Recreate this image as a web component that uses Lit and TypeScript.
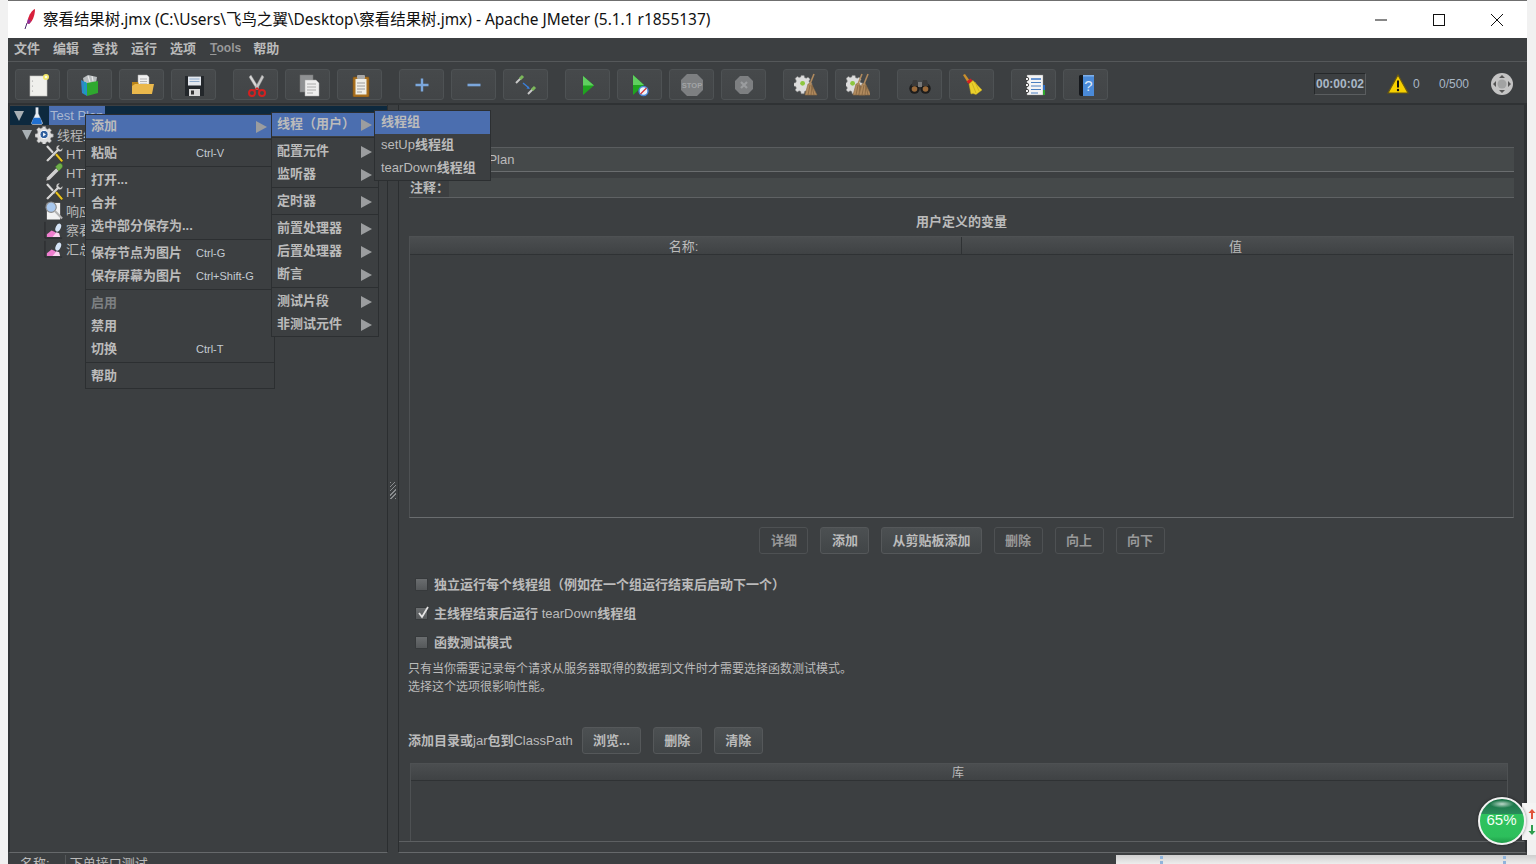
import { LitElement, html, css, svg } from "lit";
import { customElement } from "lit/decorators.js";

const GEAR = svg`<path d="M10 1h4l.6 3 2.3 1 2.6-1.6 2.8 2.8-1.6 2.6 1 2.3 3 .6v4l-3 .6-1 2.3 1.6 2.6-2.8 2.8-2.6-1.6-2.3 1-.6 3h-4l-.6-3-2.3-1-2.6 1.6-2.8-2.8 1.6-2.6-1-2.3-3-.6v-4l3-.6 1-2.3L1.700 5.200l2.800-2.800 2.600 1.600 2.300-1z" transform="scale(.72) translate(0 1)" fill="#dcdcdc" stroke="#8a8a8a" stroke-width=".8"/>`;
const BROOM = svg`<path d="M14 11l3-1 6 12H11z" fill="#b08a5e" stroke="#8a6a44" stroke-width=".6"/><path d="M14 22l2-10M17 22l1-10M20 22l-2-9" stroke="#7d5f3c" stroke-width=".7"/><path d="M16 11l4-10" stroke="#b08a5e" stroke-width="1.600"/>`;

const icons: Record<string, unknown> = {
  newFile: svg`<rect x="4" y="3" width="17" height="20" fill="#f0f0ec" stroke="#c4c4c0" stroke-width=".6"/><circle cx="6.500" cy="8" r=".6" fill="#999"/><circle cx="6.500" cy="13" r=".6" fill="#999"/><circle cx="6.500" cy="18" r=".6" fill="#999"/><circle cx="20" cy="4" r="3" fill="#f3e76a"/><circle cx="20" cy="4" r="1.300" fill="#fffde0"/>`,
  templates: svg`<path d="M5 5l5-3 9 2-1 6H6z" fill="#b9bdbf"/><path d="M3 7l6 3v13l-5-3z" fill="#2f86c9"/><path d="M9 10l11-2v12l-11 3z" fill="#2fa82f"/><path d="M7 9v12" stroke="#19a0b8" stroke-width="2"/><path d="M10 3l2 6M14 3l1 5" stroke="#e8e8e8" stroke-width="1.200"/>`,
  open: svg`<path d="M8 2h9l2 2v9H8z" fill="#f0f0f0" stroke="#aaa" stroke-width=".5"/><path d="M10 6h7M10 8.500h7M10 11h7" stroke="#999" stroke-width=".7"/><path d="M2 9h6l1 3h13v9H2z" fill="#b98419"/><path d="M2 13l3-2h19l-2 10H2z" fill="#eab84c"/>`,
  save: svg`<path d="M3 3h19v20H3z" fill="#23272b"/><rect x="6" y="3.500" width="13" height="9" fill="#e4e8ee"/><path d="M7.500 6h10M7.500 8.500h10" stroke="#8eaacb" stroke-width="1"/><rect x="7" y="16" width="11" height="7" fill="#d8d8d8"/><rect x="9" y="17.500" width="3" height="4" fill="#333"/>`,
  cut: svg`<path d="M7 2l8 13-2 2L5 4z" fill="#d8d8d8" stroke="#888" stroke-width=".4"/><path d="M18 2L11 15l2 2 7-13z" fill="#c8c8c8" stroke="#888" stroke-width=".4"/><circle cx="8" cy="20" r="3" fill="none" stroke="#d42020" stroke-width="2"/><circle cx="18" cy="20" r="3" fill="none" stroke="#d42020" stroke-width="2"/><path d="M10 18l3-3 3 3" stroke="#d42020" stroke-width="1.500" fill="none"/>`,
  copy: svg`<rect x="4" y="2" width="13" height="17" fill="#8f9193" stroke="#777" stroke-width=".5"/><path d="M9 7h11l3 3v13H9z" fill="#eeeeee" stroke="#aaa" stroke-width=".5"/><path d="M11 11h9M11 14h9M11 17h9M11 20h6" stroke="#999" stroke-width=".8"/>`,
  paste: svg`<rect x="5" y="4" width="16" height="20" rx="1" fill="#a9701f" stroke="#7d5214" stroke-width=".6"/><rect x="7.500" y="6" width="11" height="15.500" fill="#f0efe8"/><rect x="9" y="2" width="8" height="4" rx="1" fill="#a8a8a8"/><path d="M9 10h8M9 13h8M9 16h8M9 19h5" stroke="#888" stroke-width=".8"/>`,
  plus: svg`<path d="M12 5.500v13M5.500 12h13" stroke="#7ba7dc" stroke-width="2.400"/>`,
  minus: svg`<path d="M5.500 12h13" stroke="#7ba7dc" stroke-width="2.600"/>`,
  toggle: svg`<path d="M2 10l6-6" stroke="#c8c8c8" stroke-width="2"/><path d="M6 6l3-3" stroke="#7bb85a" stroke-width="3"/><path d="M14 21l6-6" stroke="#c8c8c8" stroke-width="2"/><path d="M18 17l3-3" stroke="#7bb85a" stroke-width="3"/><path d="M9 10l6 5" stroke="#3b7fd8" stroke-width="1.400"/><path d="M16 16l-3.500-.4 1.500-2.400z" fill="#3b7fd8"/>`,
  start: svg`<path d="M7 3l11 9.500L7 22z" fill="#1fa51f"/><path d="M7 3l11 9.500H7z" fill="#5fcf5f"/>`,
  startNoTimer: svg`<path d="M5 2l11 10L5 22z" fill="#1fa51f"/><path d="M5 2l11 10H5z" fill="#5fcf5f"/><circle cx="15.500" cy="18" r="4.500" fill="#eef3fb" stroke="#4a86d8" stroke-width="1.400"/><path d="M12.500 21l6-6" stroke="#d43030" stroke-width="1.300"/>`,
  stop: svg`<path d="M7 1h10l6 6v10l-6 6H7l-6-6V7z" fill="#7d7f81"/><text x="12" y="15" font-size="7.500" font-weight="700" text-anchor="middle" fill="#a2a4a6" font-family="Liberation Sans, sans-serif">STOP</text>`,
  shutdown: svg`<path d="M8 3h8l5 5v8l-5 5H8l-5-5V8z" fill="#7d7f81"/><path d="M9 9l6 6M15 9l-6 6" stroke="#9a9c9e" stroke-width="2.200"/>`,
  clear: svg`<g transform="translate(0 1)">${GEAR}<circle cx="8.600" cy="9.300" r="2.400" fill="#8cc63f"/></g>${BROOM}`,
  clearAll: svg`<g transform="translate(-1 1)">${GEAR}<circle cx="7.600" cy="9.300" r="2.400" fill="#8cc63f"/></g><g transform="translate(-4 0)">${BROOM}</g><g transform="translate(2 0)">${BROOM}</g>`,
  search: svg`<circle cx="6.500" cy="15.500" r="5.200" fill="#1c1c1c"/><circle cx="17.500" cy="15.500" r="5.200" fill="#1c1c1c"/><circle cx="6.500" cy="16" r="2.800" fill="#9a6a3a"/><circle cx="17.500" cy="16" r="2.800" fill="#9a6a3a"/><path d="M5 7h4l1.500 5h3L15 7h4l1.500 6h-17z" fill="#3a3a3a"/><rect x="10" y="9" width="4" height="5" fill="#777"/>`,
  reset: svg`<path d="M3 2l2-1 5 7-2 2z" fill="#c98f2c"/><path d="M6.500 8.500l4-3 2.500 2.500-4 3z" fill="#d42020"/><path d="M9 11l4-3.500 9 9.500-6 4.500-3-1-2 .5z" fill="#e9d02c" stroke="#c9a818" stroke-width=".5"/><path d="M12 10l4 10M15 9l4 9" stroke="#c9a818" stroke-width=".7"/>`,
  functions: svg`<rect x="5" y="2" width="16" height="20" fill="#f4f4f4" stroke="#888" stroke-width=".4"/><path d="M9 6h10" stroke="#2f6fc4" stroke-width="1.400"/><path d="M9 9.500h10M9 13h10M9 16.500h10M9 20h7" stroke="#4a7fc0" stroke-width="1"/><circle cx="5" cy="6" r="1.700" fill="#eee" stroke="#222" stroke-width=".8"/><circle cx="5" cy="12" r="1.700" fill="#eee" stroke="#222" stroke-width=".8"/><circle cx="5" cy="18" r="1.700" fill="#eee" stroke="#222" stroke-width=".8"/><rect x="21" y="12" width="2" height="5" fill="#2f6fc4"/><rect x="21" y="17" width="2" height="5" fill="#2fa82f"/>`,
  help: svg`<path d="M6 2h4v21H7c-1 0-2-1-2-2V3z" fill="#15181c"/><rect x="9" y="2" width="11" height="21" fill="#4a8ad8"/><path d="M9 2h11v1.500H9z" fill="#7fb0ea"/><text x="14.500" y="18" font-size="15" text-anchor="middle" fill="#dfeaf8" font-family="Liberation Sans, sans-serif">?</text>`,
};

const treeIcons: Record<string, unknown> = {
  flask: svg`<path d="M8 1h3v7l5 11c.3 1-.3 2-1.300 2H4.300C3.300 21 2.700 20 3 19L8 8z" fill="#e8eef4" stroke="#ccd" stroke-width=".4"/><path d="M5.500 13h8l2 6.500c0 .6-.4 1-1 1h-10.500c-.6 0-1-.4-1-1z" fill="#1f6fd0"/>`,
  gear: svg`<g transform="scale(1.050)">${GEAR}</g><circle cx="9" cy="10" r="4.300" fill="#2f5f9e" stroke="#fff" stroke-width="1"/><path d="M8 8l3 2-3 2z" fill="#fff"/>`,
  tool: svg`<path d="M2 3l2-2 9 10-2 2z" fill="#d8d8d8" stroke="#333" stroke-width=".5"/><path d="M11 11l2-2 7 8c.5 1-1 2.500-2 2z" fill="#e8c21c" stroke="#222" stroke-width=".6"/><path d="M17 1l-2 3 2 2 3-2c0 3-2 5-5 4L4 19l-2-2L13 6c-1-3 1-5 4-5z" fill="#d2d2d2" stroke="#333" stroke-width=".6"/>`,
  pipette: svg`<path d="M2 19l1-4L13 5l3 3L6 18z" fill="#d0d0d0" stroke="#333" stroke-width=".6"/><path d="M12 4l3-3c1-1 3-1 4 .5s.5 3-.5 4l-3 3z" fill="#6fb04a" stroke="#3d6d2a" stroke-width=".5"/>`,
  search: svg`<rect x="3" y="2" width="14" height="17.500" fill="#f2f2f2"/><circle cx="7.500" cy="6.500" r="5.400" fill="#a8c8ee" stroke="#8a8a8a" stroke-width="1.200"/><path d="M11.500 10.500l7.500 8" stroke="#b4b4b4" stroke-width="2.200"/>`,
  graph: svg`<path d="M1 2v17h18" stroke="#26282a" stroke-width="1" fill="none"/><path d="M3 18v-3l5-4 4 2 3 5z" fill="#f07fd0"/><path d="M9 18l4-5 3 1 1 4z" fill="#fbd4f0"/><ellipse cx="15" cy="8" rx="2.600" ry="4.500" transform="rotate(25 15 8)" fill="#d5e4f7"/>`,
  feather: svg`<path d="M14 0c-3 1-6 6-7 10l-1 4 2 1c3-2 6-8 6-15z" fill="#d8203a"/><path d="M7 10l-1 4 2 1 2-3z" fill="#8a2fa0"/><path d="M6 14l-2 6" stroke="#4a2a6a" stroke-width="1"/>`,
};

type MenuRow = { label: string; keys?: string; arrow?: boolean; active?: boolean; off?: boolean } | null;

const mainMenu: MenuRow[] = [
  { label: "添加", arrow: true, active: true },
  null,
  { label: "粘贴", keys: "Ctrl-V" },
  null,
  { label: "打开..." },
  { label: "合并" },
  { label: "选中部分保存为..." },
  null,
  { label: "保存节点为图片", keys: "Ctrl-G" },
  { label: "保存屏幕为图片", keys: "Ctrl+Shift-G" },
  null,
  { label: "启用", off: true },
  { label: "禁用" },
  { label: "切换", keys: "Ctrl-T" },
  null,
  { label: "帮助" },
];

const addMenu: MenuRow[] = [
  { label: "线程（用户）", arrow: true, active: true },
  null,
  { label: "配置元件", arrow: true },
  { label: "监听器", arrow: true },
  null,
  { label: "定时器", arrow: true },
  null,
  { label: "前置处理器", arrow: true },
  { label: "后置处理器", arrow: true },
  { label: "断言", arrow: true },
  null,
  { label: "测试片段", arrow: true },
  { label: "非测试元件", arrow: true },
];

const threadMenu: MenuRow[] = [
  { label: "线程组", active: true },
  { label: "setUp线程组" },
  { label: "tearDown线程组" },
];

const toolbarGroups = [
  [["newFile"], ["templates"], ["open"], ["save"]],
  [["cut"], ["copy"], ["paste"]],
  [["plus"], ["minus"], ["toggle"]],
  [["start"], ["startNoTimer"], ["stop"], ["shutdown"]],
  [["clear"], ["clearAll"]],
  [["search"], ["reset"]],
  [["functions"], ["help"]],
];

const treeRows = [
  { icon: "gear", text: "线程组", cls: "lvl1", open: true },
  { icon: "tool", text: "HTTP信息头管理器", cls: "lvl2" },
  { icon: "pipette", text: "HTTP请求", cls: "lvl2" },
  { icon: "tool", text: "HTTP信息头", cls: "lvl2" },
  { icon: "search", text: "响应断言", cls: "lvl2" },
  { icon: "graph", text: "察看结果树", cls: "lvl2" },
  { icon: "graph", text: "汇总报告", cls: "lvl2" },
];

// latin runs stay regular weight, only the chinese looks bold in the reference
const mixed = (text: string) =>
  text.split(/([A-Za-z]+)/).map((part, i) => (i % 2 ? html`<span class="en">${part}</span>` : part));

@customElement("app-root")
export class AppRoot extends LitElement {
  static styles = css`
    :host {
      display: block;
      width: 1536px;
      height: 864px;
      overflow: hidden;
      position: relative;
      background: #f1f1f1;
      font-family: "Liberation Sans", "Noto Sans CJK SC", sans-serif;
      font-size: 13px;
      color: #bbbbbb;
    }
    .en { font-weight: 400; }
    .window {
      position: absolute;
      left: 8px;
      top: 0;
      width: 1519px;
      height: 864px;
      display: flex;
      flex-direction: column;
      background: #3c3f41;
    }
    .title {
      height: 37px;
      flex: none;
      border-top: 1px solid #6f6f6f;
      background: #fff;
      display: flex;
      align-items: center;
      color: #111;
      font-family: "Noto Sans", "Noto Sans CJK SC", sans-serif;
      font-size: 15.450px;
    }
    .title .logo { width: 16px; height: 22px; margin: 0 6px 0 13px; }
    .title .name { flex: 1; white-space: nowrap; padding-bottom: 2px; }
    .winbtn { width: 12px; height: 12px; display: block; }
    .winbtns { display: flex; gap: 46px; padding-right: 24px; }
    .menubar {
      height: 23px;
      flex: none;
      display: flex;
      align-items: center;
      gap: 13px;
      padding: 0 0 4px 6px;
      box-sizing: border-box;
      font-weight: 700;
    }
    .menubar u { text-underline-offset: 2px; }
    .menubar .latin { font-size: 12px; font-weight: 700; color: #999; margin: 0 -1px 0 1px; }
    .toolbar {
      height: 44px;
      flex: none;
      box-sizing: border-box;
      border-top: 1px solid #55585a;
      border-bottom: 2px solid #2f3234;
      padding: 7px 14px 0 7px;
      display: flex;
      align-items: flex-start;
      gap: 17px;
    }
    .group { display: flex; gap: 7px; }
    .tbtn {
      width: 45px;
      height: 31px;
      box-sizing: border-box;
      border: 1px solid #4e5254;
      border-radius: 3px;
      background: linear-gradient(#46494b, #424547);
      display: flex;
      align-items: center;
      justify-content: center;
    }
    .tbtn svg { width: 24px; height: 24px; }
    .status {
      margin-left: auto;
      display: flex;
      align-items: center;
      height: 22px;
      margin-top: 4px;
      font-size: 12px;
      color: #a9b7c6;
    }
    .timer {
      width: 52px;
      height: 22px;
      box-sizing: border-box;
      border: 1px solid #5a5d5f;
      border-top-color: #25282a;
      border-left-color: #25282a;
      display: flex;
      align-items: center;
      justify-content: center;
      margin-right: 21px;
      font-weight: 700;
    }
    .warn { width: 22px; height: 20px; margin-right: 4px; }
    .count { width: 26px; }
    .users { width: 52px; }
    .round { width: 22px; height: 22px; }
    .main { flex: 1; min-height: 0; display: flex; }
    .tree {
      width: 380px;
      flex: none;
      box-sizing: border-box;
      border-left: 2px solid #2f3234;
      border-right: 1px solid #2b2e30;
      border-bottom: 1px solid #66696b;
      padding-top: 1px;
      overflow: hidden;
    }
    .row {
      height: 19px;
      display: flex;
      align-items: center;
      white-space: nowrap;
    }
    .row.selected { background: #0d293e; }
    .row .tw {
      width: 0;
      height: 0;
      border-left: 5.500px solid transparent;
      border-right: 5.500px solid transparent;
      border-top: 10px solid #a9b0b4;
    }
    .row.root { padding-left: 4px; }
    .row.root svg { width: 16px; height: 20px; margin: 0 4px 0 5px; }
    .row.root .txt {
      background: #4b6eaf;
      color: #a9b7d0;
      width: 56px;
      height: 19px;
      line-height: 20px;
      padding-left: 1px;
      box-sizing: border-box;
    }
    .row.lvl1 { padding-left: 12px; }
    .row.lvl1 svg { width: 20px; height: 19px; margin: 0 2px 0 3px; }
    .row.lvl2 { padding-left: 34px; }
    .row.lvl2 svg { width: 19px; height: 19px; margin-right: 3px; }
    .split {
      width: 10px;
      flex: none;
      display: flex;
      align-items: center;
      justify-content: center;
      padding-top: 22px;
      box-sizing: border-box;
    }
    .grip {
      width: 6px;
      height: 17px;
      background: repeating-linear-gradient(135deg, #8a8d8f 0 1px, #3c3f41 1px 3px);
    }
    .right {
      flex: 1;
      min-width: 0;
      box-sizing: border-box;
      border-left: 1px solid #2b2e30;
      border-right: 2px solid #2f3234;
      border-bottom: 1px solid #66696b;
    }
    .pane {
      height: 737px;
      box-sizing: border-box;
      padding: 0 10px 0 10px;
      border-bottom: 1px solid #5d6062;
      border-right: 1px solid #2f3234;
    }
    .heading { height: 42px; display: flex; align-items: center; padding-left: 1px; }
    .name-row {
      height: 25px;
      box-sizing: border-box;
      display: flex;
      align-items: center;
      border-top: 1px solid #5a5d5f;
      border-bottom: 1px solid #6a6d6f;
      background: #45494a;
    }
    .name-row .lbl { width: 52px; padding-left: 1px; box-sizing: border-box; }
    .comment-row {
      height: 20px;
      margin-top: 6px;
      display: flex;
      align-items: center;
      box-sizing: border-box;
      border-bottom: 1px solid #5f6264;
      font-weight: 700;
    }
    .comment-row .lbl { width: 40px; padding: 0 0 2px 1px; box-sizing: border-box; }
    .comment-row .fld { flex: 1; height: 100%; background: #45494a; }
    .vars-title {
      height: 38px;
      box-sizing: border-box;
      display: flex;
      align-items: flex-end;
      justify-content: center;
      padding-bottom: 6px;
      font-weight: 700;
    }
    .table {
      height: 282px;
      box-sizing: border-box;
      border: 1px solid #4e5153;
      border-bottom-color: #6a6d6f;
    }
    .thead {
      height: 18px;
      display: flex;
      box-sizing: border-box;
      border-bottom: 1px solid #2f3234;
      background: linear-gradient(#4b4e50, #3f4244);
    }
    .thead div {
      flex: 1;
      text-align: center;
      line-height: 19px;
      padding-right: 4px;
    }
    .thead div + div { border-left: 1px solid #2f3234; }
    .lib .thead div { padding-right: 2px; font-size: 12px; }
    .actions {
      height: 27px;
      margin-top: 9px;
      display: flex;
      justify-content: center;
      gap: 12px;
      padding-left: 1px;
    }
    .btn {
      height: 27px;
      box-sizing: border-box;
      border: 1px solid #55585a;
      border-radius: 3px;
      padding: 0 10px 2px;
      min-width: 49px;
      display: flex;
      align-items: center;
      justify-content: center;
      font-weight: 700;
      background: linear-gradient(#4c5052, #414547);
      white-space: nowrap;
    }
    .btn.off { background: none; border-color: #4e5153; color: #999; }
    .checks { margin-top: 16px; }
    .check {
      height: 29px;
      box-sizing: border-box;
      display: flex;
      align-items: center;
      gap: 6px;
      padding: 0 0 3px 6px;
      font-weight: 700;
      white-space: pre;
    }
    .box {
      width: 13px;
      height: 13px;
      box-sizing: border-box;
      border: 1px solid #36393b;
      border-radius: 1px;
      background: linear-gradient(#6a6d6f, #55585a);
      position: relative;
      flex: none;
      margin-top: 3px;
    }
    .box svg { position: absolute; left: 0; top: -3px; width: 14px; height: 15px; }
    .note { margin-top: 3px; margin-left: -1px; font-size: 12px; line-height: 18px; }
    .cp-row {
      height: 27px;
      margin-top: 31px;
      margin-left: -1px;
      display: flex;
      align-items: center;
      gap: 12px;
      font-weight: 700;
    }
    .cp-row .lbl { width: 165px; white-space: nowrap; padding-bottom: 2px; }
    .cp-row .btn { padding-left: 10px; padding-right: 10px; }
    .cp-row .lbl + .btn { margin-left: -3px; }
    .lib {
      height: 78px;
      margin-top: 9px;
      margin-left: 1px;
      margin-right: 6px;
      box-sizing: border-box;
      border: 1px solid #4e5153;
      border-bottom: none;
    }
    .lib .thead { height: 17px; }
    .foot {
      height: 11px;
      flex: none;
      display: flex;
      width: 1528px;
      overflow: hidden;
    }
    .foot .dark {
      width: 1108px;
      flex: none;
      display: flex;
      padding: 2px 0 0 12px;
      box-sizing: border-box;
      white-space: nowrap;
      line-height: 18px;
      gap: 15px;
    }
    .foot .field { border-left: 1px solid #55585a; padding-left: 4px; }
    .foot .light {
      flex: 1;
      margin-top: 2px;
      background: linear-gradient(#cfcfcf, #ededed);
      position: relative;
    }
    .dash {
      position: absolute;
      top: 1px;
      width: 3px;
      height: 8px;
      background: repeating-linear-gradient(#8fb4dc 0 3px, transparent 3px 5px);
    }
    .dash.a { left: 44px; }
    .dash.b { left: 387px; }
    .menu {
      position: absolute;
      box-sizing: border-box;
      background: #3c3f41;
      border: 1px solid #2c2f31;
    }
    .menu.m1 { left: 77px; top: 114px; width: 190px; z-index: 1; }
    .menu.m2 { left: 263px; top: 112px; width: 108px; z-index: 2; }
    .menu.m3 { left: 366px; top: 110px; width: 117px; z-index: 3; }
    .item {
      height: 23px;
      box-sizing: border-box;
      display: flex;
      align-items: center;
      padding: 0 7px 4px 5px;
      font-weight: 700;
      white-space: nowrap;
    }
    .m2 .item { padding-right: 6px; }
    .m3 .item { padding-left: 6px; }
    .item.active { background: #4b6eaf; }
    .item.off { color: #7d8082; }
    .item .lbl { width: 105px; flex: none; }
    .m2 .item .lbl, .m3 .item .lbl { width: auto; }
    .item .keys { font-size: 11px; font-weight: 400; color: #c4cbd2; margin-top: 2px; }
    .item .arrow {
      margin: 4px 0 0 auto;
      width: 0;
      height: 0;
      border-top: 6px solid transparent;
      border-bottom: 6px solid transparent;
      border-left: 11px solid #9b9d9f;
    }
    .sep { height: 4px; box-sizing: border-box; padding-top: 1px; }
    .sep::after { content: ""; display: block; height: 1px; background: #2c2f31; }
    .meter {
      position: absolute;
      left: 1478px;
      top: 797px;
      width: 48px;
      height: 48px;
      box-sizing: border-box;
      border: 2px solid #f2f2f2;
      border-radius: 50%;
      box-shadow: 0 0 3px rgba(0, 0, 0, .5);
      background:
        radial-gradient(ellipse 12px 4px at 50% 5px, rgba(255, 255, 255, .7), transparent),
        linear-gradient(#146e42 0, #2a8a5a 33%, #2fc35e 33%, #2dbf5c 85%, #1f9a49 100%);
      color: #f4fff6;
      font-family: "Liberation Sans", sans-serif;
      font-size: 15px;
      display: flex;
      align-items: center;
      justify-content: center;
      padding: 0 1px 3px 0;
      z-index: 5;
    }
    .meter-tab {
      position: absolute;
      left: 1522px;
      top: 803px;
      width: 14px;
      height: 37px;
      background: #f4f4f4;
      z-index: 4;
      display: flex;
      align-items: center;
      justify-content: flex-end;
    }
    .meter-tab svg { width: 8px; height: 28px; }
  `;

  private menu(cls: string, rows: MenuRow[]) {
    return html`<div class="menu ${cls}">
      ${rows.map((r) =>
        r
          ? html`<div class="item ${r.active ? "active" : ""} ${r.off ? "off" : ""}">
              <span class="lbl">${mixed(r.label)}</span>
              ${r.keys ? html`<span class="keys">${r.keys}</span>` : ""}
              ${r.arrow ? html`<span class="arrow"></span>` : ""}
            </div>`
          : html`<div class="sep"></div>`
      )}
    </div>`;
  }

  render() {
    return html`
      <div class="window">
        <div class="title">
          <svg class="logo" viewBox="0 0 16 22">${treeIcons.feather}</svg>
          <span class="name">察看结果树.jmx (C:\\Users\\飞鸟之翼\\Desktop\\察看结果树.jmx) - Apache JMeter (5.1.1 r1855137)</span>
          <div class="winbtns">
            <svg class="winbtn" viewBox="0 0 12 12"><path d="M0 6h12" stroke="#111" stroke-width="1"/></svg>
            <svg class="winbtn" viewBox="0 0 12 12"><rect x=".5" y=".5" width="11" height="11" fill="none" stroke="#111"/></svg>
            <svg class="winbtn" viewBox="0 0 12 12"><path d="M0 0l12 12M12 0L0 12" stroke="#111" stroke-width="1"/></svg>
          </div>
        </div>
        <div class="menubar">
          <span>文件</span><span>编辑</span><span>查找</span><span>运行</span><span>选项</span>
          <span class="latin"><u>T</u>ools</span><span>帮助</span>
        </div>
        <div class="toolbar">
          ${toolbarGroups.map(
            (g) => html`<div class="group">
              ${g.map(([k]) => html`<div class="tbtn"><svg viewBox="0 0 24 24">${icons[k]}</svg></div>`)}
            </div>`
          )}
          <div class="status">
            <div class="timer">00:00:02</div>
            <svg class="warn" viewBox="0 0 22 20"><path d="M11 1l10 18H1z" fill="#f7d000" stroke="#6b5a10" stroke-width="1.200"/><path d="M11 6.500v7" stroke="#111" stroke-width="2"/><circle cx="11" cy="16" r="1.200" fill="#111"/></svg>
            <span class="count">0</span>
            <span class="users">0/500</span>
            <svg class="round" viewBox="0 0 22 22"><circle cx="11" cy="11" r="11" fill="#c4c4c4"/><circle cx="11" cy="11" r="4.500" fill="#3c3f41" opacity=".25"/><path d="M11 2l3 3H8zM11 20l3-3H8zM2 11l3-3v6zM20 11l-3-3v6z" fill="#555"/></svg>
          </div>
        </div>
        <div class="main">
          <div class="tree">
            <div class="row root selected">
              <span class="tw"></span>
              <svg viewBox="0 0 19 22">${treeIcons.flask}</svg>
              <span class="txt">Test Plan</span>
            </div>
            ${treeRows.map(
              (r) => html`<div class="row ${r.cls}">
                ${r.open ? html`<span class="tw"></span>` : ""}
                <svg viewBox="0 0 20 20">${treeIcons[r.icon]}</svg>
                <span>${r.text}</span>
              </div>`
            )}
          </div>
          <div class="split"><div class="grip"></div></div>
          <div class="right">
            <div class="pane">
              <div class="heading">测试计划</div>
              <div class="name-row"><span class="lbl">名称：</span><span>Test Plan</span></div>
              <div class="comment-row"><span class="lbl">注释：</span><div class="fld"></div></div>
              <div class="vars-title">用户定义的变量</div>
              <div class="table">
                <div class="thead"><div>名称:</div><div>值</div></div>
              </div>
              <div class="actions">
                <div class="btn off">详细</div>
                <div class="btn">添加</div>
                <div class="btn">从剪贴板添加</div>
                <div class="btn off">删除</div>
                <div class="btn off">向上</div>
                <div class="btn off">向下</div>
              </div>
              <div class="checks">
                <div class="check"><span class="box"></span><span>独立运行每个线程组（例如在一个组运行结束后启动下一个）</span></div>
                <div class="check">
                  <span class="box"><svg viewBox="0 0 14 15"><path d="M3 8l3 4 6-10" fill="none" stroke="#e4e4e4" stroke-width="1.800"/></svg></span>
                  <span>${mixed("主线程结束后运行 tearDown线程组")}</span>
                </div>
                <div class="check"><span class="box"></span><span>函数测试模式</span></div>
              </div>
              <div class="note">
                只有当你需要记录每个请求从服务器取得的数据到文件时才需要选择函数测试模式。<br />
                选择这个选项很影响性能。
              </div>
              <div class="cp-row">
                <span class="lbl">${mixed("添加目录或jar包到ClassPath")}</span>
                <div class="btn">浏览...</div>
                <div class="btn">删除</div>
                <div class="btn">清除</div>
              </div>
              <div class="lib"><div class="thead"><div>库</div></div></div>
            </div>
          </div>
        </div>
        <div class="foot">
          <div class="dark"><span>名称:</span><span class="field">下单接口测试</span></div>
          <div class="light"><span class="dash a"></span><span class="dash b"></span></div>
        </div>
        ${this.menu("m1", mainMenu)} ${this.menu("m2", addMenu)} ${this.menu("m3", threadMenu)}
      </div>
      <div class="meter-tab">
        <svg viewBox="0 0 8 28"><path d="M4 1l3.500 4H5v6H3V5H.5z" fill="#e0533a"/><path d="M4 27l3.500-4H5v-6H3v6H.5z" fill="#2f9e4f"/></svg>
      </div>
      <div class="meter">65%</div>
    `;
  }
}
